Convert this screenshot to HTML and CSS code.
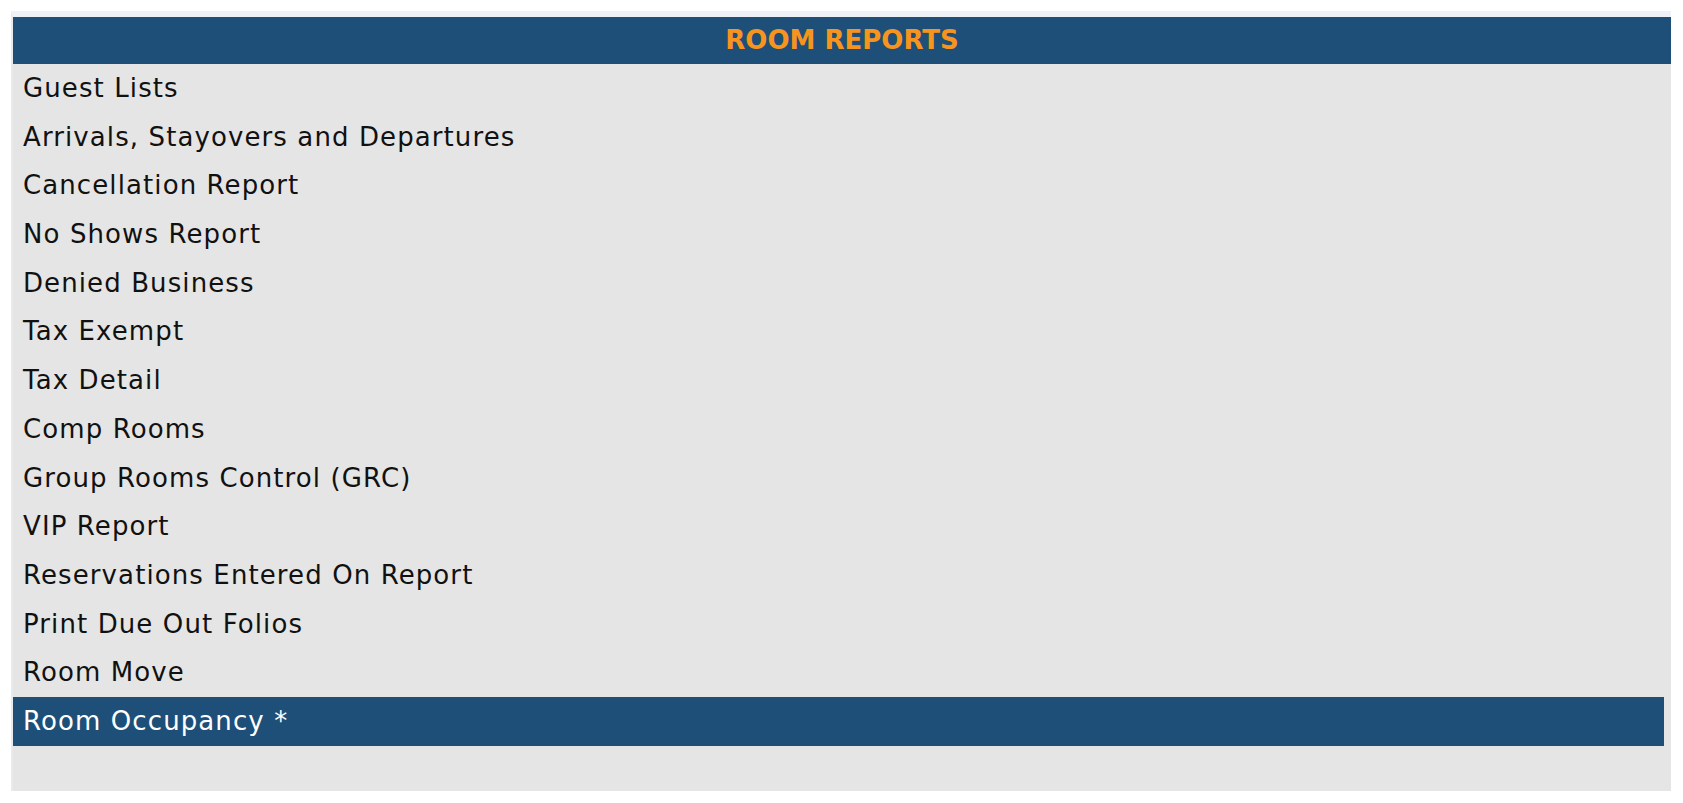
FILE: index.html
```html
<!DOCTYPE html>
<html>
<head>
    <meta charset="UTF-8" />
    <title>Room Reports</title>
    <link rel="stylesheet" href="styles.css">
</head>
<body>

    <div class="reports">
        <div class="reports-title">ROOM REPORTS</div>

        <ul class="report-list">
            <li class="report-item">Guest Lists</li>
            <li class="report-item">Arrivals, Stayovers and Departures</li>
            <li class="report-item">Cancellation Report</li>
            <li class="report-item">No Shows Report</li>
            <li class="report-item">Denied Business</li>
            <li class="report-item">Tax Exempt</li>
            <li class="report-item">Tax Detail</li>
            <li class="report-item">Comp Rooms</li>
            <li class="report-item">Group Rooms Control (GRC)</li>
            <li class="report-item">VIP Report</li>
            <li class="report-item">Reservations Entered On Report</li>
            <li class="report-item">Print Due Out Folios</li>
            <li class="report-item">Room Move</li>
            <li class="report-item selected">Room Occupancy *</li>
        </ul>
    </div>

</body>
</html>
```

FILE: styles.css
```css
body {
    margin: 0;
    padding: 11px 12px 12px 11px;
    background-color: #ffffff;
    font-family: "DejaVu Sans", Inter, sans-serif;
}

div.reports {
    background-color: #e5e5e5;
    border-top: 6px solid #eef2f7;
    border-left: 2px solid #e9eaec;
    padding-bottom: 45px;
}

div.reports-title {
    height: 47px;
    line-height: 47px;
    background-color: #1d4f79;
    color: #f7941d;
    text-align: center;
    font-size: 26px;
    font-weight: 600;
}

ul.report-list {
    list-style: none;
    margin: 0;
    padding: 0 7px 0 0;
}

li.report-item {
    height: 48.7px;
    line-height: 48.7px;
    padding-left: 10px;
    font-size: 26px;
    color: #111111;
    letter-spacing: 1.1px;
}

li.report-item.selected {
    background-color: #1d4f79;
    color: #ffffff;
}
```
